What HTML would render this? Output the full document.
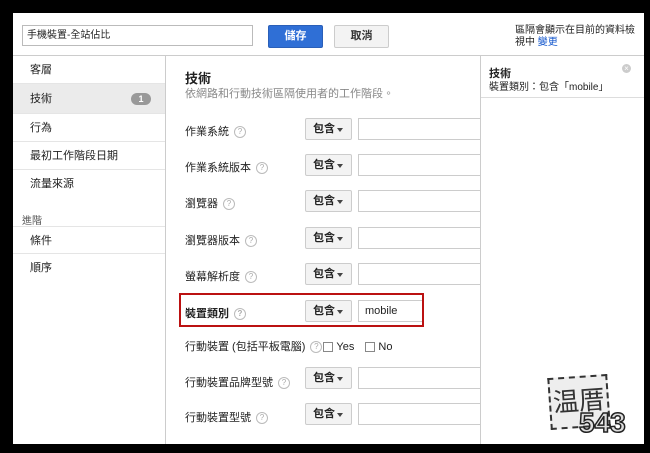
<!DOCTYPE html>
<html><head><meta charset="utf-8"><style>
body{margin:0;width:650px;height:453px;background:#000;font-family:"Liberation Sans","Noto Sans CJK TC",sans-serif;font-size:11px;color:#222;overflow:hidden;position:relative}
.page{position:absolute;left:13px;top:13px;width:631px;height:431px;background:#fff;overflow:hidden}
.a{position:absolute}
.btn{position:absolute;height:21px;border-radius:2px;font-size:11px;font-weight:bold;text-align:center;line-height:21px}
.nav{position:absolute;left:0;width:152px;height:28px;line-height:28px;padding-left:17px;box-sizing:border-box;border-bottom:1px solid #e5e5e5}
.lab{position:absolute;left:172px;font-size:11px}
.q{display:inline-block;width:10px;height:10px;border:1px solid #bbb;border-radius:50%;font-size:8px;line-height:10px;text-align:center;color:#aaa;margin-left:5px;vertical-align:middle}
.dd{position:absolute;left:292px;width:47px;height:22px;border:1px solid #ccc;background:#f3f3f3;border-radius:2px;font-size:11px;font-weight:bold;line-height:20px;padding-left:7px;box-sizing:border-box}
.dd:after{content:"";position:absolute;right:8px;top:9px;border-left:3px solid transparent;border-right:3px solid transparent;border-top:4px solid #444}
.in{position:absolute;left:345px;width:123px;height:22px;border:1px solid #ccc;box-sizing:border-box;border-right:none;padding-left:6px;line-height:20px}
</style></head><body><div class="page">
<div class="a" style="left:9px;top:12px;width:231px;height:21px;border:1px solid #bbb;box-sizing:border-box;line-height:19px;padding-left:4px;font-size:10px">手機裝置-全站佔比</div>
<div class="btn" style="left:255px;top:12px;width:53px;background:#2f6fd6;border:1px solid #2a5fb8;color:#fff">儲存</div>
<div class="btn" style="left:321px;top:12px;width:53px;background:#f3f3f3;border:1px solid #ccc;color:#333">取消</div>
<div class="a" style="left:502px;top:12px;font-size:10px;line-height:12px">區隔會顯示在目前的資料檢<br>視中 <span style="color:#15c">變更</span></div>
<div class="a" style="left:0;top:42px;width:631px;height:1px;background:#ccc"></div>
<div class="a" style="left:152px;top:43px;width:1px;height:400px;background:#ccc"></div>
<div class="a" style="left:467px;top:43px;width:1px;height:400px;background:#ccc"></div>
<div class="nav" style="top:43px">客層</div>
<div class="nav" style="top:71px;height:30px;line-height:30px;background:#ebebeb">技術<span style="position:absolute;left:118px;top:9px;width:20px;height:12px;border-radius:6px;background:#999;color:#fff;font-size:9px;line-height:12px;text-align:center;font-weight:bold">1</span></div>
<div class="nav" style="top:101px">行為</div>
<div class="nav" style="top:129px">最初工作階段日期</div>
<div class="nav" style="top:157px;border-bottom:none">流量來源</div>
<div class="a" style="left:9px;top:199px;font-size:10px;color:#555">進階</div>
<div class="nav" style="top:213px;border-top:1px solid #e5e5e5">條件</div>
<div class="nav" style="top:241px;border-bottom:none">順序</div>
<div class="a" style="left:172px;top:55px;font-size:13px;font-weight:bold">技術</div>
<div class="a" style="left:172px;top:72px;color:#888">依網路和行動技術區隔使用者的工作階段。</div>
<div class="lab" style="top:110px">作業系統<span class="q">?</span></div><div class="dd" style="top:105px">包含</div><div class="in" style="top:105px"></div>
<div class="lab" style="top:146px">作業系統版本<span class="q">?</span></div><div class="dd" style="top:141px">包含</div><div class="in" style="top:141px"></div>
<div class="lab" style="top:182px">瀏覽器<span class="q">?</span></div><div class="dd" style="top:177px">包含</div><div class="in" style="top:177px"></div>
<div class="lab" style="top:219px">瀏覽器版本<span class="q">?</span></div><div class="dd" style="top:214px">包含</div><div class="in" style="top:214px"></div>
<div class="lab" style="top:255px">螢幕解析度<span class="q">?</span></div><div class="dd" style="top:250px">包含</div><div class="in" style="top:250px"></div>
<div class="lab" style="top:292px;font-weight:bold">裝置類別<span class="q">?</span></div><div class="dd" style="top:287px">包含</div><div class="in" style="top:287px;width:66px;border-right:1px solid #ccc">mobile</div>
<div class="a" style="left:166px;top:280px;width:245px;height:34px;border:2px solid #b11;box-sizing:border-box"></div>
<div class="lab" style="top:325px">行動裝置 (包括平板電腦)<span class="q">?</span><span style="display:inline-block;width:8px;height:8px;border:1px solid #888;margin:0 3px 0 1px;vertical-align:middle"></span>Yes <span style="display:inline-block;width:8px;height:8px;border:1px solid #888;margin:0 3px 0 8px;vertical-align:middle"></span>No</div>
<div class="lab" style="top:361px">行動裝置品牌型號<span class="q">?</span></div><div class="dd" style="top:354px">包含</div><div class="in" style="top:354px"></div>
<div class="lab" style="top:396px">行動裝置型號<span class="q">?</span></div><div class="dd" style="top:390px">包含</div><div class="in" style="top:390px"></div>
<div class="a" style="left:476px;top:52px;font-weight:bold">技術</div>
<div class="a" style="left:476px;top:65px;font-size:10px">裝置類別：包含「mobile」</div>
<div class="a" style="left:609px;top:51px;width:9px;height:9px;border-radius:50%;background:#ccc;color:#fff;font-size:8px;line-height:9px;text-align:center">×</div>
<div class="a" style="left:468px;top:84px;width:163px;height:1px;background:#ddd"></div>
<div class="a" style="left:536px;top:363px;width:56px;height:48px;border:2px dashed #333;background:#eee;transform:rotate(-4deg);font-size:26px;line-height:46px;text-align:center;color:#333">温厝</div>
<div class="a" style="left:566px;top:394px;font-size:28px;font-weight:bold;color:#ddd;-webkit-text-stroke:1.5px #222">543</div>
</div></body></html>
